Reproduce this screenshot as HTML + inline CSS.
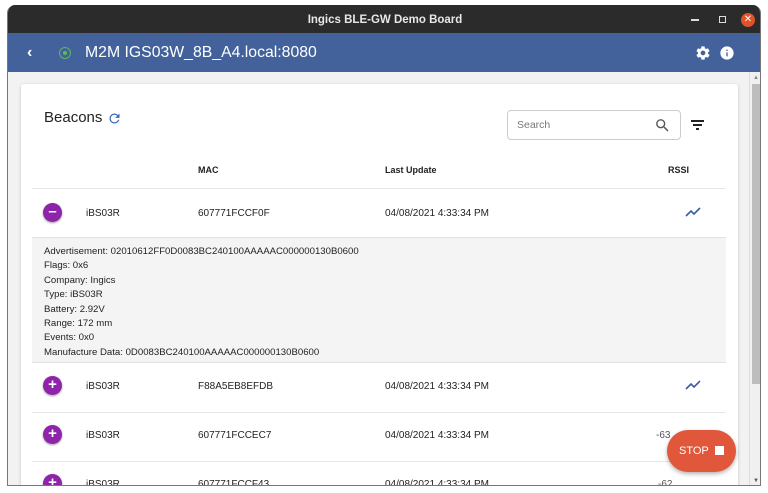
<!DOCTYPE html>
<html><head><style>
*{margin:0;padding:0;box-sizing:border-box}
body{width:768px;height:493px;background:#fff;font-family:"Liberation Sans",Arial,sans-serif;position:relative;overflow:hidden}
.a{position:absolute}
.win{left:7px;top:5px;width:754px;height:481px;border:1px solid #777;border-top:none;border-radius:8px 8px 0 0;overflow:hidden;background:#f2f2f2}
.tb{left:0;top:0;width:754px;height:28px;background:#2b2b2b;color:#e8e8e8;font-weight:bold;font-size:11.5px;text-align:center;line-height:30px}
.ab{left:0;top:28px;width:754px;height:39px;background:#43619b;color:#fff}
.card{left:13px;top:79px;width:717px;height:420px;background:#fff;border-radius:3px;box-shadow:0 1px 3px rgba(0,0,0,.2)}
.t{font-size:10px;color:#222}
.h{font-size:9px;font-weight:bold;color:#222}
.line{height:1px;background:#e6e6e6;width:694px}
.btn{width:19px;height:19px;border-radius:50%;background:#8e24aa;box-shadow:0 1px 2px rgba(0,0,0,.4);color:#fff;text-align:center;font-size:15px;line-height:18px;font-weight:bold}
.sb{left:741px;top:67px;width:13px;height:420px;background:#f0f0f0;border-left:1px solid #ddd}
</style></head><body>
<div class="a win">
 <div class="a tb">Ingics BLE-GW Demo Board</div>
 <div class="a" style="left:683px;top:14px;width:8px;height:1.5px;background:#ddd"></div>
 <div class="a" style="left:711px;top:11px;width:7px;height:7px;border:1.3px solid #ddd"></div>
 <div class="a" style="left:733px;top:8px;width:14px;height:14px;border-radius:50%;background:#e0522a;color:#fff;font-size:10px;line-height:14px;text-align:center">✕</div>
 <div class="a ab">
  <div class="a" style="left:19px;top:11px;font-size:16px;font-weight:bold">‹</div>
  <div class="a" style="left:51px;top:14px;width:12px;height:12px;border-radius:50%;border:1.5px solid #5cb85c"><div class="a" style="left:2.5px;top:2.5px;width:4px;height:4px;border-radius:50%;background:#5cb85c"></div></div>
  <div class="a" style="left:77px;top:11px;font-size:15.8px">M2M IGS03W_8B_A4.local:8080</div>
  <svg class="a" style="left:687px;top:12px" width="16" height="16" viewBox="0 0 24 24"><path fill="#fff" d="M19.4 13c.04-.3.06-.6.06-1s-.02-.7-.06-1l2.1-1.650c.2-.15.24-.42.12-.64l-2-3.46c-.12-.22-.39-.3-.61-.22l-2.49 1c-.52-.4-1.08-.73-1.690-.98l-.38-2.650C14.46 2.18 14.25 2 14 2h-4c-.25 0-.46.18-.49.42l-.38 2.65c-.61.25-1.17.59-1.69.98l-2.49-1c-.23-.09-.49 0-.61.22l-2 3.46c-.13.22-.07.49.12.64L4.57 11c-.04.32-.07.65-.07 1s.03.68.07 1l-2.11 1.65c-.19.15-.24.42-.12.64l2 3.46c.12.22.39.3.61.22l2.49-1c.52.4 1.08.73 1.69.98l.38 2.65c.03.24.24.42.49.42h4c.25 0 .46-.18.49-.42l.38-2.65c.61-.25 1.17-.59 1.69-.98l2.49 1c.23.09.49 0 .61-.22l2-3.46c.12-.22.07-.49-.12-.64L19.4 13zM12 15.5c-1.93 0-3.5-1.57-3.5-3.5s1.57-3.5 3.5-3.5 3.5 1.57 3.5 3.5-1.57 3.5-3.5 3.5z"/></svg>
  <svg class="a" style="left:711px;top:12px" width="16" height="16" viewBox="0 0 24 24"><path fill="#fff" d="M12 2C6.48 2 2 6.48 2 12s4.48 10 10 10 10-4.48 10-10S17.52 2 12 2zm1 15h-2v-6h2v6zm0-8h-2V7h2v2z"/></svg>
 </div>
 <div class="a card">
  <div class="a" style="left:23px;top:25px;font-size:15px;color:#222">Beacons</div>
  <svg class="a" style="left:86px;top:27px" width="15" height="15" viewBox="0 0 24 24"><path fill="#3a6bb0" d="M17.65 6.35A7.958 7.958 0 0012 4c-4.420 0-7.99 3.58-7.99 8s3.57 8 7.99 8c3.73 0 6.84-2.55 7.73-6h-2.08A5.99 5.99 0 0112 18c-3.31 0-6-2.69-6-6s2.69-6 6-6c1.66 0 3.14.69 4.22 1.78L13 11h7V4l-2.35 2.35z"/></svg>
  <div class="a" style="left:486px;top:26px;width:174px;height:30px;border:1px solid #ccc;border-radius:4px"><div class="a" style="left:9px;top:8px;font-size:10.5px;color:#777">Search</div>
  <svg class="a" style="left:146px;top:6px" width="17" height="17" viewBox="0 0 24 24"><path fill="#555" d="M15.5 14h-.79l-.28-.27A6.47 6.47 0 0016 9.5 6.5 6.5 0 109.5 16c1.61 0 3.09-.59 4.23-1.57l.27.28v.79l5 4.99L20.49 19l-4.99-5zm-6 0C7.01 14 5 11.99 5 9.5S7.01 5 9.5 5 14 7.01 14 9.5 11.990 14 9.5 14z"/></svg></div>
  <div class="a" style="left:670px;top:36px;width:13px;height:2px;background:#222"></div>
  <div class="a" style="left:672px;top:40px;width:9px;height:2px;background:#222"></div>
  <div class="a" style="left:675px;top:44px;width:3px;height:2px;background:#222"></div>
  <div class="a h" style="left:177px;top:81px">MAC</div>
  <div class="a h" style="left:364px;top:81px">Last Update</div>
  <div class="a h" style="left:647px;top:81px">RSSI</div>
  <div class="a line" style="left:11px;top:104px"></div>
  <div class="a btn" style="left:22px;top:119px">–</div>
  <div class="a t" style="left:65px;top:124px">iBS03R</div>
  <div class="a t" style="left:177px;top:124px">607771FCCF0F</div>
  <div class="a t" style="left:364px;top:124px">04/08/2021 4:33:34 PM</div>
  <svg class="a" style="left:664px;top:122px" width="16" height="12" viewBox="0 0 16 12"><path d="M1 10l5-5 3 3 6-6" fill="none" stroke="#3a5da0" stroke-width="1.6"/></svg>
  <div class="a" style="left:11px;top:153px;width:694px;height:126px;background:#f4f4f4;border-top:1px solid #e2e2e2;border-bottom:1px solid #e2e2e2"></div>
  <div class="a t" style="left:23px;top:161px;line-height:14.4px;font-size:9.6px">Advertisement: 02010612FF0D0083BC240100AAAAAC000000130B0600<br>Flags: 0x6<br>Company: Ingics<br>Type: iBS03R<br>Battery: 2.92V<br>Range: 172 mm<br>Events: 0x0<br>Manufacture Data: 0D0083BC240100AAAAAC000000130B0600</div>
  <div class="a btn" style="left:22px;top:292px">+</div>
  <div class="a t" style="left:65px;top:297px">iBS03R</div>
  <div class="a t" style="left:177px;top:297px">F88A5EB8EFDB</div>
  <div class="a t" style="left:364px;top:297px">04/08/2021 4:33:34 PM</div>
  <svg class="a" style="left:664px;top:295px" width="16" height="12" viewBox="0 0 16 12"><path d="M1 10l5-5 3 3 6-6" fill="none" stroke="#3a5da0" stroke-width="1.6"/></svg>
  <div class="a line" style="left:11px;top:328px"></div>
  <div class="a btn" style="left:22px;top:341px">+</div>
  <div class="a t" style="left:65px;top:346px">iBS03R</div>
  <div class="a t" style="left:177px;top:346px">607771FCCEC7</div>
  <div class="a t" style="left:364px;top:346px">04/08/2021 4:33:34 PM</div>
  <div class="a t" style="left:635px;top:346px;color:#555">-63</div>
  <div class="a line" style="left:11px;top:377px"></div>
  <div class="a btn" style="left:22px;top:390px">+</div>
  <div class="a t" style="left:65px;top:395px">iBS03R</div>
  <div class="a t" style="left:177px;top:395px">607771FCCF43</div>
  <div class="a t" style="left:364px;top:395px">04/08/2021 4:33:34 PM</div>
  <div class="a t" style="left:637px;top:395px;color:#555">-62</div>
 </div>
 <div class="a sb"><div class="a" style="left:2px;top:12px;width:8px;height:300px;background:#bdbdbd"></div>
  <div class="a" style="left:3px;top:3px;font-size:6px;color:#888">▲</div><div class="a" style="left:3px;top:406px;font-size:6px;color:#555">▼</div></div>
</div>
<div class="a" style="left:667px;top:430px;width:69px;height:42px;border-radius:21px;background:#e0573b;box-shadow:0 2px 4px rgba(0,0,0,.3);color:#fff;font-size:11px;line-height:42px;padding-left:12px">STOP<span style="display:inline-block;width:9px;height:9px;background:#fff;margin-left:6px;vertical-align:-1px"></span></div>
</body></html>
